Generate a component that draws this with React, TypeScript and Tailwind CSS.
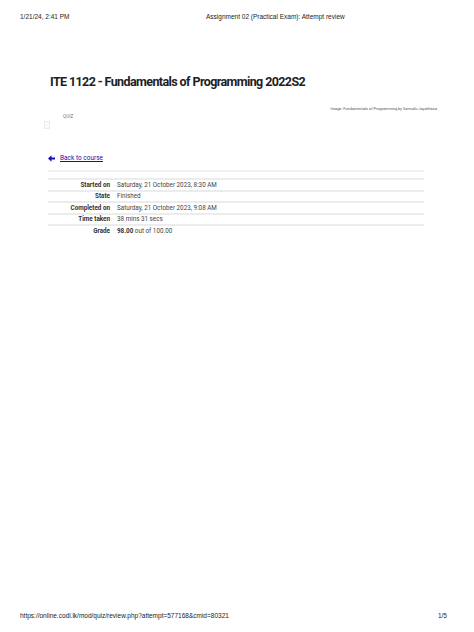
import React from "react";

const rows: { label: string; value: React.ReactNode }[] = [
  { label: "Started on", value: "Saturday, 21 October 2023, 8:30 AM" },
  { label: "State", value: "Finished" },
  { label: "Completed on", value: "Saturday, 21 October 2023, 9:08 AM" },
  { label: "Time taken", value: "38 mins 31 secs" },
  {
    label: "Grade",
    value: (
      <>
        <b className="font-bold text-[#333]">98.00</b> out of 100.00
      </>
    ),
  },
];

export default function App() {
  return (
    <div className="w-[474px] h-[632px] bg-white flex flex-col text-[#1d2125]">
      <header
        className="flex items-center pl-[20px] pt-[12px] text-[6.5px] text-[#222]"
        style={{ fontFamily: "'Liberation Sans', Arial, sans-serif" }}
      >
        <span className="w-[186px]">1/21/24, 2:41 PM</span>
        <span>Assignment 02 (Practical Exam): Attempt review</span>
      </header>

      <main className="flex-1 pl-[48px] pt-[54px]" style={{ fontFamily: "Roboto, 'Noto Sans', sans-serif" }}>
        <h1 className="text-[12.5px] font-bold leading-none pl-[2px] tracking-[-0.6px]">
          ITE 1122 - Fundamentals of Programming 2022S2
        </h1>

        <div className="flex justify-end w-[389px] mt-[19px] text-[3.9px] text-[#555] leading-none">
          Image: Fundamentals of Programming by Samudu Jayathissa
        </div>

        <div className="flex items-start mt-[4px]">
          <div className="w-[6px] h-[8px] mt-[6px] -ml-[4px] border border-[#ececec] bg-[#fafafa]" />
          <span className="ml-[13px] text-[4.5px] leading-none text-[#777] tracking-wide">QUIZ</span>
        </div>

        <a href="#" className="flex items-center gap-[5px] mt-[26px] text-[6.5px] text-[#1a0dab] leading-none">
          <svg width="7" height="7" viewBox="0 0 10 10" className="fill-[#1a0dab]">
            <path d="M0 5 L5 0.5 L5 3.5 L10 3.5 L10 6.5 L5 6.5 L5 9.5 Z" />
          </svg>
          <span className="underline">Back to course</span>
        </a>

        <div className="mt-[8px] w-[376px] text-[6.3px] leading-none">
          <div className="h-[8px] border-t-2 border-[#f0f0f0]" />
          {rows.map((r) => (
            <div key={r.label} className="flex items-center h-[11.5px] border-t-2 border-[#ececec]">
              <span className="w-[62px] text-right font-bold text-[#333]">{r.label}</span>
              <span className="ml-[7px] text-[#444]">{r.value}</span>
            </div>
          ))}
        </div>
      </main>

      <footer
        className="flex items-center justify-between pl-[20px] pr-[27px] pb-[11px] text-[6.5px] text-[#222]"
        style={{ fontFamily: "'Liberation Sans', Arial, sans-serif" }}
      >
        <span>https://online.codl.lk/mod/quiz/review.php?attempt=577168&amp;cmid=80321</span>
        <span>1/5</span>
      </footer>
    </div>
  );
}
